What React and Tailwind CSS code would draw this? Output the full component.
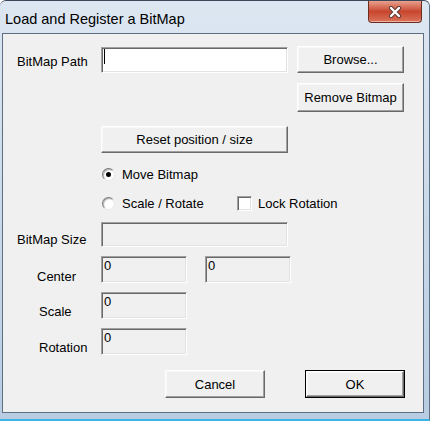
import React from 'react'

const sunken =
  'border border-t-[#a0a0a0] border-l-[#a0a0a0] border-b-white border-r-white shadow-[inset_1px_1px_0_#696969,inset_-1px_-1px_0_#e3e3e3]'

const raised =
  'border border-t-white border-l-white border-b-[#696969] border-r-[#696969] shadow-[inset_-1px_-1px_0_#a0a0a0,inset_1px_1px_0_#f8f8f8] bg-[#f0f0f0]'

const Button = ({ children, className = '', isDefault = false }) => (
  <div className={`${isDefault ? 'border border-black' : ''} ${className}`}>
    <button className={`w-full h-full ${raised} flex items-center justify-center text-[13px] leading-none text-black`}>
      {children}
    </button>
  </div>
)

const Field = ({ value, className = '', white = false }) => (
  <div className={`${sunken} ${white ? 'bg-white' : 'bg-[#f0f0f0]'} ${className} px-[2px] pt-[1px] text-[13px] leading-[15px]`}>
    {value}
  </div>
)

const Radio = ({ checked }) => (
  <span className="w-[13px] h-[13px] rounded-full border border-t-[#7a7a7a] border-l-[#7a7a7a] border-b-[#e8e8e8] border-r-[#e8e8e8] bg-white shadow-[inset_1px_1px_1px_#b0b0b0] flex items-center justify-center">
    {checked && <span className="w-[5px] h-[5px] rounded-full bg-black" />}
  </span>
)

const CloseIcon = () => (
  <svg width="14" height="12" viewBox="0 0 14 12">
    <path d="M3 2 L11 10 M11 2 L3 10" stroke="#5a3a35" strokeWidth="4.2" strokeLinecap="round" />
    <path d="M3 2 L11 10 M11 2 L3 10" stroke="#ffffff" strokeWidth="2.4" strokeLinecap="round" />
  </svg>
)

export default function App() {
  return (
    <div className="w-[430px] h-[421px] flex flex-col bg-gradient-to-b from-[#dde7f2] via-[#cad9e9] to-[#b8cce2] border-t border-[#3b4758] border-r border-r-[#5d6f86] border-b-2 border-b-[#3cb4e8] rounded-t-[6px] overflow-hidden font-['Liberation_Sans',Arial,sans-serif] text-black">
      <div className="h-[32px] flex items-start shrink-0">
        <div className="flex-1 pl-[5px] pt-[10px] text-[14.5px] leading-[16px] text-black">
          Load and Register a BitMap
        </div>
        <div className="mr-[7px] w-[54px] h-[22px] rounded-b-[4px] border border-t-0 border-[#6b2c22] bg-gradient-to-b from-[#e6a08e] via-[#c8452d] to-[#d9735a] flex items-center justify-center shadow-[inset_0_-1px_0_#f0b0a0]">
          <CloseIcon />
        </div>
      </div>

      <div className="flex-1 ml-[2px] mr-[5px] mb-[6px] border border-[#5e6f84] bg-[#f0f0f0] pl-[14px] pt-[12px] text-[13px]">
        {/* bitmap path */}
        <div className="flex h-[27px]">
          <div className="w-[84px] pt-[8px] leading-[15px]">BitMap Path</div>
          <div className={`${sunken} bg-white w-[187px] h-[26px] mt-[1px] pl-[2px] pt-[1px]`}>
            <span className="block w-px h-[15px] bg-black" />
          </div>
          <Button className="ml-[9px] w-[107px] h-[27px]">Browse...</Button>
        </div>

        <div className="flex mt-[10px]">
          <Button className="ml-[280px] w-[107px] h-[29px]">Remove Bitmap</Button>
        </div>

        <div className="flex mt-[14px]">
          <Button className="ml-[84px] w-[187px] h-[27px]">Reset position / size</Button>
        </div>

        {/* mode */}
        <div className="flex items-center h-[15px] mt-[14px] ml-[85px] leading-[15px]">
          <Radio checked />
          <span className="ml-[7px]">Move Bitmap</span>
        </div>

        <div className="flex items-center h-[15px] mt-[14px] ml-[85px] leading-[15px]">
          <div className="flex items-center w-[135px]">
            <Radio />
            <span className="ml-[7px]">Scale / Rotate</span>
          </div>
          <span className={`${sunken} bg-white w-[15px] h-[15px]`} />
          <span className="ml-[6px]">Lock Rotation</span>
        </div>

        {/* values */}
        <div className="flex h-[25px] mt-[11px]">
          <div className="w-[84px] pt-[10px] leading-[15px]">BitMap Size</div>
          <Field className="w-[187px] h-[25px]" value="" />
        </div>

        <div className="flex h-[27px] mt-[9px]">
          <div className="w-[84px] pl-[20px] pt-[13px] leading-[15px]">Center</div>
          <Field className="w-[86px] h-[27px]" value="0" />
          <Field className="ml-[18px] w-[86px] h-[27px]" value="0" />
        </div>

        <div className="flex h-[27px] mt-[9px]">
          <div className="w-[84px] pl-[22px] pt-[12px] leading-[15px]">Scale</div>
          <Field className="w-[86px] h-[27px]" value="0" />
        </div>

        <div className="flex h-[27px] mt-[9px]">
          <div className="w-[84px] pl-[22px] pt-[12px] leading-[15px]">Rotation</div>
          <Field className="w-[86px] h-[27px]" value="0" />
        </div>

        {/* actions */}
        <div className="flex mt-[15px]">
          <Button className="ml-[148px] w-[100px] h-[28px]">Cancel</Button>
          <Button isDefault className="ml-[40px] w-[100px] h-[28px]">OK</Button>
        </div>
      </div>
    </div>
  )
}
